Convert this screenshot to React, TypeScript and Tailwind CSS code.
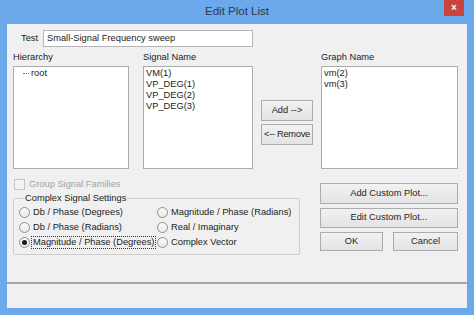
const font = { fontFamily: '"Liberation Sans", Arial, sans-serif' };

const ListBox = ({ items }: { items: string[] }) => (
  <div className="bg-white border border-[#ababab] h-[103px] pt-[1px] pl-[2px] leading-[11px]">
    {items.map((i) => (
      <div key={i}>{i}</div>
    ))}
  </div>
);

const Btn = ({ label, className }: { label: string; className: string }) => (
  <div className={`flex items-center justify-center whitespace-nowrap border border-[#acacac] bg-gradient-to-b from-[#f2f2f2] to-[#e3e3e3] text-[#1e1e1e] ${className}`}>
    {label}
  </div>
);

const Radio = ({ label, checked, focus }: { label: string; checked?: boolean; focus?: boolean }) => (
  <div className="flex items-center h-[15px]">
    <span className="w-[11px] h-[11px] rounded-full border border-[#8e8f8f] bg-gradient-to-b from-[#fafafa] to-[#e8e8e8] flex items-center justify-center shrink-0">
      {checked && <span className="w-[5px] h-[5px] rounded-full bg-[#1a1a1a]" />}
    </span>
    <span className={`ml-[1px] px-[1px] leading-[11px] whitespace-nowrap ${focus ? 'border border-dotted border-[#333]' : 'border border-transparent'}`}>
      {label}
    </span>
  </div>
);

export default function App() {
  return (
    <div style={font} className="w-[474px] h-[315px] bg-[#6ca9ea] overflow-hidden text-[9.3px] text-[#1b1b1b]">
      <div className="relative h-[24px] flex items-center justify-center">
        <span className="text-[11.5px] text-[#2b3a50] pb-[1px]">Edit Plot List</span>
        <div className="absolute top-0 right-[10px] w-[20px] h-[16px] bg-[#c8453d] flex items-center justify-center text-white text-[10px] font-bold leading-none">
          ×
        </div>
      </div>

      <div className="ml-[7px] w-[460px] h-[284px] bg-[#f0f0f0] flex flex-col">
        <div className="flex items-center mt-[6px] h-[17px]">
          <span className="ml-[14px] w-[22px]">Test</span>
          <div className="w-[210px] h-[17px] bg-white border border-[#b5b5b5] pl-[3px] flex items-center">
            Small-Signal Frequency sweep
          </div>
        </div>

        <div className="flex mt-[4px] ml-[6px]">
          <div className="w-[116px]">
            <div className="h-[12px] leading-[12px] mb-[3px]">Hierarchy</div>
            <div className="bg-white border border-[#ababab] h-[103px] pt-[1px] leading-[11px]">
              <div className="flex items-center ml-[9px]">
                <span className="w-[6px] border-t border-dotted border-[#777]" />
                <span className="ml-[2px]">root</span>
              </div>
            </div>
          </div>
          <div className="w-[110px] ml-[14px]">
            <div className="h-[12px] leading-[12px] mb-[3px]">Signal Name</div>
            <ListBox items={["VM(1)", "VP_DEG(1)", "VP_DEG(2)", "VP_DEG(3)"]} />
          </div>
          <div className="w-[52px] ml-[8px] pt-[49px] flex flex-col gap-[3px]">
            <Btn label="Add -->" className="h-[21px]" />
            <Btn label="<-- Remove" className="h-[21px] tracking-[-0.3px]" />
          </div>
          <div className="w-[137px] ml-[8px]">
            <div className="h-[12px] leading-[12px] mb-[3px]">Graph Name</div>
            <ListBox items={["vm(2)", "vm(3)"]} />
          </div>
        </div>

        <div className="flex mt-[10px] ml-[6px]">
          <div className="w-[287px]">
            <div className="flex items-center h-[11px]">
              <span className="ml-[1px] w-[11px] h-[11px] border border-[#c4c4c4] bg-[#f3f3f3]" />
              <span className="ml-[4px] text-[#a3a3a3]">Group Signal Families</span>
            </div>
            <fieldset className="mt-[3px] h-[62px] border border-[#cdcdcd] rounded-[2px] pl-[5px]">
              <legend className="ml-[5px] px-[1px] leading-[11px]">Complex Signal Settings</legend>
              <div className="grid grid-cols-[138px_1fr] mt-[1px]">
                <Radio label="Db / Phase (Degrees)" />
                <Radio label="Magnitude / Phase (Radians)" />
                <Radio label="Db / Phase (Radians)" />
                <Radio label="Real / Imaginary" />
                <Radio label="Magnitude / Phase (Degrees)" checked focus />
                <Radio label="Complex Vector" />
              </div>
            </fieldset>
          </div>
          <div className="w-[138px] ml-[20px] pt-[4px] flex flex-col">
            <Btn label="Add Custom Plot..." className="h-[21px]" />
            <Btn label="Edit Custom Plot..." className="h-[20px] mt-[4px]" />
            <div className="flex justify-between mt-[4px]">
              <Btn label="OK" className="h-[19px] w-[63px]" />
              <Btn label="Cancel" className="h-[19px] w-[65px]" />
            </div>
          </div>
        </div>

        <div className="mt-auto h-[26px] border-t-2 border-[#a6a6a6] bg-[#f0f0f0]" />
      </div>
    </div>
  );
}
